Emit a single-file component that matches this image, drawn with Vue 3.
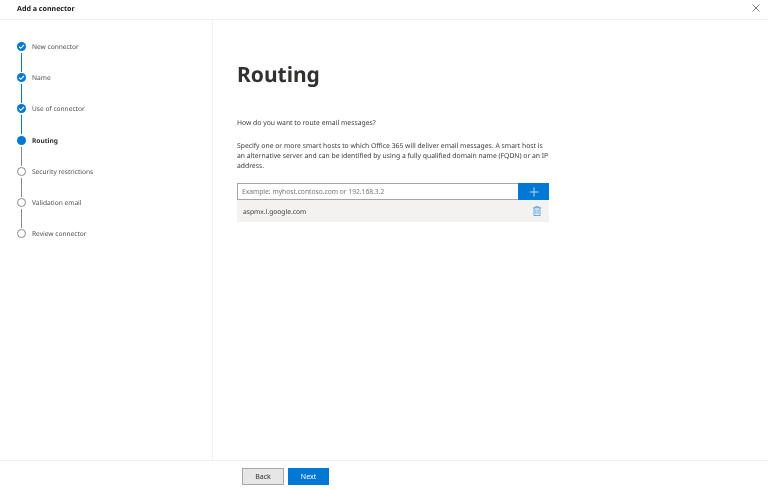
<template>
  <div class="panel">
    <header class="panel-head">
      <span class="panel-title">Add a connector</span>
      <button class="close-btn" aria-label="Close">
        <svg width="8" height="8" viewBox="0 0 8 8" fill="none">
          <path d="M0.5 0.5l7 7M7.5 0.5l-7 7" stroke="#6b6b6b" stroke-width="0.8"/>
        </svg>
      </button>
    </header>

    <div class="panel-body">
      <nav class="steps">
        <div
          v-for="(step, i) in steps"
          :key="step.label"
          class="step"
          :class="step.state"
        >
          <div class="step-marker">
            <span class="step-dot">
              <svg v-if="step.state === 'done'" width="9" height="9" viewBox="0 0 9 9" fill="none">
                <path d="M2 4.7l1.7 1.6L7 3" stroke="#fff" stroke-width="1.1"/>
              </svg>
            </span>
            <span v-if="i < steps.length - 1" class="step-line"></span>
          </div>
          <span class="step-label">{{ step.label }}</span>
        </div>
      </nav>

      <main class="content">
        <h1 class="page-title">Routing</h1>
        <p class="question">How do you want to route email messages?</p>
        <p class="description">
          Specify one or more smart hosts to which Office 365 will deliver email messages. A smart host is an alternative server and can be identified by using a fully qualified domain name (FQDN) or an IP address.
        </p>

        <div class="host-input">
          <input type="text" class="host-field" placeholder="Example: myhost.contoso.com or 192.168.3.2" />
          <button class="add-btn" aria-label="Add">
            <svg width="10" height="10" viewBox="0 0 10 10" fill="none">
              <path d="M5 0.5v9M0.5 5h9" stroke="#fff" stroke-width="0.7"/>
            </svg>
          </button>
        </div>
        <div class="host-row">
          <span>{{ host }}</span>
          <svg class="trash" width="8" height="10" viewBox="0 0 8 10" fill="none">
            <path d="M0 1.8h8M2.6 1.8V0.6h2.8v1.2M1 1.8v7.7h6V1.8M2.9 3.4v4.6M5.1 3.4v4.6" stroke="#3a96dd" stroke-width="0.8"/>
          </svg>
        </div>
      </main>
    </div>

    <footer class="panel-foot">
      <button class="btn back">Back</button>
      <button class="btn next">Next</button>
    </footer>
  </div>
</template>

<script setup>
const host = 'aspmx.l.google.com'

const steps = [
  { label: 'New connector', state: 'done' },
  { label: 'Name', state: 'done' },
  { label: 'Use of connector', state: 'done' },
  { label: 'Routing', state: 'current' },
  { label: 'Security restrictions', state: 'todo' },
  { label: 'Validation email', state: 'todo' },
  { label: 'Review connector', state: 'todo' }
]
</script>

<style>
html, body {
  margin: 0;
  background: #fff;
}
</style>

<style scoped>
.panel {
  width: 768px;
  height: 489px;
  display: flex;
  flex-direction: column;
  font-family: "Noto Sans", "Open Sans", sans-serif;
  text-rendering: geometricPrecision;
  will-change: transform;
  color: #323130;
  overflow: hidden;
}

.panel-head {
  height: 20px;
  flex-shrink: 0;
  display: flex;
  align-items: center;
  justify-content: space-between;
  padding: 0 8px 4px 17px;
  box-sizing: border-box;
  border-bottom: 1px solid #f0f0f0;
}

.panel-title {
  font-size: 7.1px;
  line-height: 9px;
  padding-top: 4px;
  font-weight: 700;
  color: #1b1a19;
}

.close-btn {
  border: none;
  background: none;
  padding: 0;
  display: flex;
}

.panel-body {
  flex: 1;
  display: flex;
  min-height: 0;
}

.steps {
  width: 213px;
  flex-shrink: 0;
  box-sizing: border-box;
  padding: 22px 0 0 17px;
  border-right: 1px solid #f3f2f1;
}

.step {
  height: 31.2px;
  display: flex;
  gap: 6px;
}

.step-marker {
  width: 9px;
  display: flex;
  flex-direction: column;
  align-items: center;
}

.step-dot {
  width: 9px;
  height: 9px;
  flex-shrink: 0;
  box-sizing: border-box;
  border-radius: 50%;
  display: flex;
}

.done .step-dot,
.current .step-dot {
  background: #0078d4;
}

.todo .step-dot {
  border: 1px solid #8a8886;
  background: #fff;
}

.step-line {
  width: 1px;
  height: 19px;
  margin-top: 2px;
  background: #8a8886;
}

.done .step-line {
  background: #0078d4;
}

.step-label {
  font-size: 6.6px;
  line-height: 10px;
  color: #4f4d4b;
}

.current .step-label {
  font-weight: 700;
  color: #323130;
}

.content {
  flex: 1;
  padding: 40px 0 0 24px;
}

.page-title {
  margin: 0;
  font-size: 21px;
  line-height: 30px;
  font-weight: 700;
  color: #323130;
}

.question {
  margin: 28px 0 0;
  font-size: 6.8px;
  line-height: 10px;
  color: #3b3a39;
}

.description {
  width: 312px;
  margin: 13px 0 0;
  font-size: 6.8px;
  line-height: 10px;
  color: #3b3a39;
}

.host-input {
  width: 312px;
  height: 17px;
  margin-top: 12px;
  display: flex;
}

.host-field {
  flex: 1;
  min-width: 0;
  box-sizing: border-box;
  padding: 0 4px;
  border: 1px solid #a6a6a6;
  border-right: none;
  outline: none;
  font-family: inherit;
  font-size: 6.7px;
}

.host-field::placeholder {
  color: #7a7876;
  opacity: 1;
}

.add-btn {
  width: 31px;
  flex-shrink: 0;
  border: none;
  padding: 0;
  background: #0078d4;
  display: flex;
  align-items: center;
  justify-content: center;
}

.host-row {
  width: 312px;
  height: 22px;
  box-sizing: border-box;
  padding: 0 8px 0 6px;
  background: #f3f2f1;
  display: flex;
  align-items: center;
  justify-content: space-between;
  font-size: 6.7px;
  color: #3b3a39;
}

.panel-foot {
  height: 29px;
  flex-shrink: 0;
  box-sizing: border-box;
  border-top: 1px solid #f0f0f0;
  padding: 7px 0 0 242px;
  display: flex;
  gap: 4px;
}

.btn {
  width: 42px;
  height: 17px;
  box-sizing: border-box;
  padding: 0;
  font-family: inherit;
  font-size: 7px;
}

.back {
  background: #e6e6e6;
  border: 1px solid #a6a6a6;
  color: #323130;
}

.next {
  width: 41px;
  background: #0078d4;
  border: none;
  color: #fff;
}
</style>
